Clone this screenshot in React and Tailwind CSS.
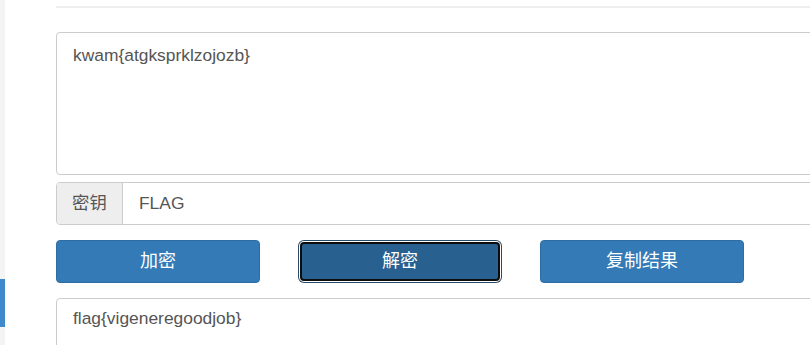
export default function App() {
  const font = { fontFamily: '"Liberation Sans", Arial, "Noto Sans CJK SC", sans-serif' };
  return (
    <div className="w-[810px] h-[345px] overflow-hidden bg-white flex" style={font}>
      {/* left nav strip */}
      <div className="w-[5px] shrink-0 bg-[#f4f4f4] flex flex-col">
        <div className="h-[279px] shrink-0" />
        <div className="h-[48px] shrink-0 bg-[#3e8acc]" />
      </div>
      <div className="w-[51px] shrink-0" />
      <div className="w-[900px] shrink-0 flex flex-col">
        <div className="h-[6px] shrink-0" />
        <div className="h-[2px] shrink-0 bg-[#eeeeee]" />
        <div className="h-[24px] shrink-0" />

        <div className="h-[143px] shrink-0 rounded-[4px] border border-[#cccccc] px-4 pt-[10px] text-[17.4px] leading-[24px] text-[#555555]">
          kwam{'{'}atgksprklzojozb{'}'}
        </div>

        <div className="mt-[7px] h-[43px] shrink-0 flex rounded-[4px] border border-[#cccccc] overflow-hidden text-[17.4px] text-[#555555]">
          <div className="w-[66px] bg-[#eeeeee] border-r border-[#cccccc] flex items-center justify-center">密钥</div>
          <div className="flex-1 flex items-center pl-4">FLAG</div>
        </div>

        <div className="mt-[15px] shrink-0 flex items-center gap-[38px] text-[18px] text-white">
          <button className="w-[204px] h-[43px] rounded-[4px] bg-[#337ab7] border border-[#2e6da4]">加密</button>
          <div className="w-[204px] h-[43px] p-[2px]">
            <button className="w-full h-full rounded-[4px] bg-[#286090] border-2 border-[#0d0d0d] shadow-[0_0_0_1px_#ffffff,0_0_0_2px_#2b4a66]">解密</button>
          </div>
          <button className="w-[204px] h-[43px] rounded-[4px] bg-[#337ab7] border border-[#2e6da4]">复制结果</button>
        </div>

        <div className="mt-[15px] h-[100px] shrink-0 rounded-[4px] border border-[#cccccc] px-4 pt-[7px] text-[17.4px] leading-[24px] text-[#555555]">
          flag{'{'}vigeneregoodjob{'}'}
        </div>
      </div>
    </div>
  );
}
